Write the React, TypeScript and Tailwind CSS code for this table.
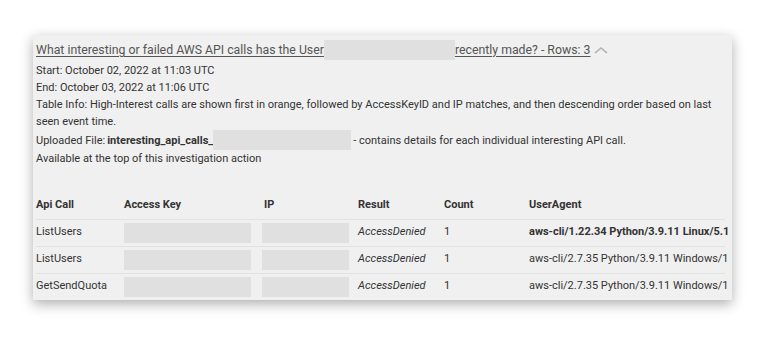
import React from "react";

// 표 행 데이터
interface ApiRow {
  call: string;
  result: string;
  count: number;
  agent: string;
  bold?: boolean;
}

const rows: ApiRow[] = [
  { call: "ListUsers", result: "AccessDenied", count: 1, agent: "aws-cli/1.22.34 Python/3.9.11 Linux/5.1", bold: true },
  { call: "ListUsers", result: "AccessDenied", count: 1, agent: "aws-cli/2.7.35 Python/3.9.11 Windows/1" },
  { call: "GetSendQuota", result: "AccessDenied", count: 1, agent: "aws-cli/2.7.35 Python/3.9.11 Windows/1" },
];

const cols = "grid grid-cols-[88px_138px_96px_86px_85px_196px]";

// 가려진 값 (redacted)
const Redacted: React.FC<{ w: string }> = ({ w }) => (
  <div className={`${w} h-[20px] bg-[#e0e0e0]`} />
);

const App: React.FC = () => {
  return (
    <div
      className="w-[768px] h-[337px] bg-white pt-[35px] pl-[33px] overflow-hidden"
      style={{ fontFamily: "Roboto, 'Liberation Sans', sans-serif" }}
    >
      <div className="w-[699px] h-[265px] bg-[#f0f0f0] shadow-[0_4px_12px_rgba(0,0,0,0.32)] pl-[3px] pt-[5px] text-[11px] text-[#333]">
        {/* Title */}
        <div className="flex items-center h-[20px] text-[12.3px] text-[#555]">
          <span className="underline underline-offset-2">What interesting or failed AWS API calls has the User</span>
          <span className="w-[131px] h-[20px] bg-[#e0e0e0]" />
          <span className="underline underline-offset-2">recently made? - Rows: 3</span>
          <svg width="16" height="10" viewBox="0 0 16 10" className="ml-[3px]">
            <path d="M2 8 L8 3 L14 8" fill="none" stroke="#b0b0b0" strokeWidth="1.6" />
          </svg>
        </div>

        {/* Info */}
        <div className="leading-[17px] mt-[2px] pr-[8px]">
          <p>Start: October 02, 2022 at 11:03 UTC</p>
          <p>End: October 03, 2022 at 11:06 UTC</p>
          <p>
            Table Info: High-Interest calls are shown first in orange, followed by AccessKeyID and IP matches, and then descending order based on last seen event time.
          </p>
          <p className="flex items-center">
            Uploaded File:<b className="ml-[2px]">interesting_api_calls_</b>
            <span className="w-[138px] h-[20px] bg-[#e0e0e0]" />
            <span className="ml-[2px]">- contains details for each individual interesting API call.</span>
          </p>
          <p>Available at the top of this investigation action</p>
        </div>

        {/* Table */}
        <div className="mt-[25px] w-[689px]">
          <div className={`${cols} h-[27px] items-center font-bold`}>
            <div>Api Call</div>
            <div>Access Key</div>
            <div className="pl-[2px]">IP</div>
            <div>Result</div>
            <div>Count</div>
            <div>UserAgent</div>
          </div>
          {rows.map((r, i) => (
            <div key={i} className={`${cols} h-[27px] items-center border-t border-[#e2e2e2] pb-[1px]`}>
              <div>{r.call}</div>
              <div><Redacted w="w-[127px]" /></div>
              <div><Redacted w="w-[87px]" /></div>
              <div className="italic">{r.result}</div>
              <div>{r.count}</div>
              <div className={`whitespace-nowrap ${r.bold ? "font-bold" : ""}`}>{r.agent}</div>
            </div>
          ))}
        </div>
      </div>
    </div>
  );
};

export default App;
